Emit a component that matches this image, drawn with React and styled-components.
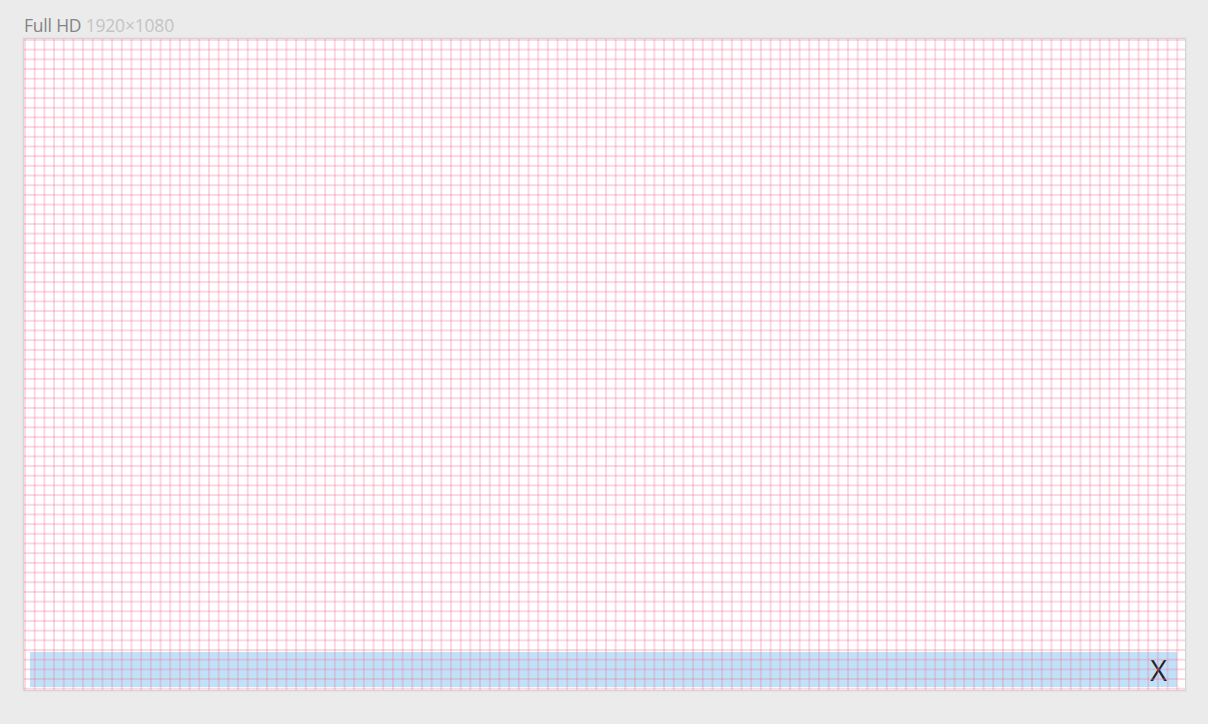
import React from 'react'
import styled, { createGlobalStyle } from 'styled-components'

const GlobalStyle = createGlobalStyle`
  html, body {
    margin: 0;
    padding: 0;
    background: #ebebeb;
    font-family: "Open Sans", "Noto Sans", sans-serif;
  }
`

const Page = styled.div`
  width: 1208px;
  height: 724px;
  box-sizing: border-box;
  padding: 14px 0 0 23px;
`

const Label = styled.div`
  font-size: 17.5px;
  line-height: 23px;
  height: 24px;
  color: #848484;
  white-space: nowrap;
  margin-left: 1px;
  letter-spacing: -0.2px;

  span {
    color: #c4c4c4;
  }
`

// the grid is drawn at design size (1920x1080, 16px cells) and scaled down
const Frame = styled.div`
  position: relative;
  overflow: hidden;
  width: 1163px;
  height: 653px;
  box-sizing: border-box;
  border: 1px solid #d4d4d4;
  background: #fff;
  box-shadow: 0 0 2px rgba(0, 0, 0, 0.08);
  display: flex;
  flex-direction: column;
  justify-content: flex-end;
  padding: 0 8px 3px 6px;

  &::after {
    content: '';
    position: absolute;
    left: 0;
    top: 0;
    width: 1920px;
    height: 1080px;
    transform: scale(0.6052);
    transform-origin: 0 0;
    pointer-events: none;
    background-image:
      linear-gradient(to right, rgba(245, 110, 150, 0.28) 2.5px, transparent 2.5px),
      linear-gradient(to bottom, rgba(245, 110, 150, 0.28) 2.5px, transparent 2.5px);
    background-size: 16px 16px;
  }
`

const Bar = styled.div`
  height: 35px;
  background: #c0e2f9;
  display: flex;
  align-items: center;
  justify-content: flex-end;
  padding-right: 10px;
`

const Close = styled.span`
  font-size: 29px;
  line-height: 1;
  color: #222;
  font-weight: 400;
`

export default function App() {
  return (
    <>
      <GlobalStyle />
      <Page>
        <Label>Full HD <span>1920×1080</span></Label>
        <Frame>
          <Bar>
            <Close>X</Close>
          </Bar>
        </Frame>
      </Page>
    </>
  )
}
